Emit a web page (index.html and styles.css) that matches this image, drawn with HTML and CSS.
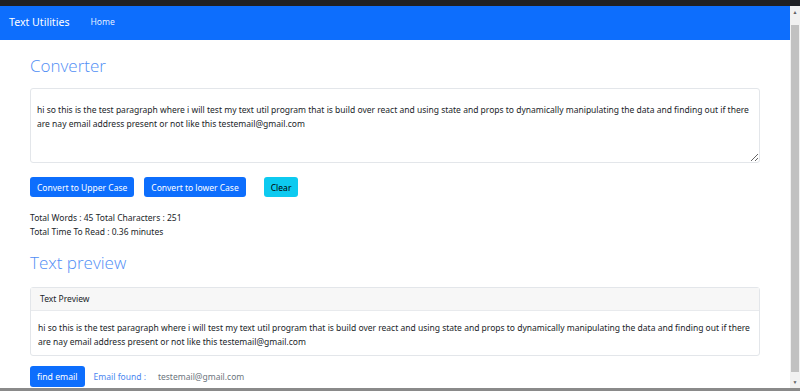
FILE: index.html
```html
<!DOCTYPE html>
<html lang="en">
<head>
  <meta charset="UTF-8">
  <meta name="viewport" content="width=device-width, initial-scale=1.0">
  <title>Text Utilities</title>
  <link rel="stylesheet" href="styles.css">
</head>
<body>

  <div class="chrome-top"></div>

  <div class="frame">
    <div class="page">

      <!-- navbar -->
      <nav class="navbar">
        <span class="brand">Text Utilities</span>
        <a class="nav-link" href="#">Home</a>
      </nav>

      <div class="container">
        <h1 class="title">Converter</h1>
        <textarea class="text-box" rows="5">hi so this is the test paragraph where i will test my text util program that is build over react and using state and props to dynamically manipulating the data and finding out if there are nay email address present or not like this testemail@gmail.com</textarea>

        <div class="actions">
          <button class="btn btn-primary">Convert to Upper Case</button>
          <button class="btn btn-primary">Convert to lower Case</button>
          <button class="btn btn-info">Clear</button>
        </div>

        <div class="stats">
          <p>Total Words : 45 Total Characters : 251</p>
          <p>Total Time To Read : 0.36 minutes</p>
        </div>

        <h1 class="title title-preview">Text preview</h1>
        <div class="card">
          <div class="card-header">Text Preview</div>
          <div class="card-body">hi so this is the test paragraph where i will test my text util program that is build over react and using state and props to dynamically manipulating the data and finding out if there are nay email address present or not like this testemail@gmail.com</div>
        </div>

        <div class="email-row">
          <button class="btn btn-primary btn-find">find email</button>
          <span class="email-label">Email found :</span>
          <span class="email-value">testemail@gmail.com</span>
        </div>
      </div>

    </div>

    <!-- fake window scrollbar -->
    <div class="scrollbar">
      <span class="arrow">&#9650;</span>
      <div class="thumb"></div>
      <span class="arrow">&#9660;</span>
    </div>
  </div>

  <div class="chrome-bottom"></div>

</body>
</html>
```

FILE: styles.css
```css
body {
  margin: 0;
  padding: 0;
  font-family: 'Noto Sans', 'Open Sans', sans-serif;
  font-size: 8.5px;
  color: #212529;
  background: #fff;
  height: 391px;
  overflow: hidden;
}

.chrome-top {
  height: 6px;
  background: #202124;
}

.frame {
  display: flex;
  height: 382px;
}

.page {
  flex: 1;
  overflow: hidden;
}

.navbar {
  height: 34px;
  background: #0d6efd;
  display: flex;
  align-items: center;
  padding: 0 0 2px 9px;
  box-sizing: border-box;
}

.brand {
  color: #fff;
  font-size: 10.6px;
  margin-right: 21px;
}

.nav-link {
  color: rgba(255, 255, 255, 0.9);
  text-decoration: none;
  font-size: 8.6px;
}

.container {
  padding: 0 30px;
}

.title {
  font-family: 'Open Sans', 'Noto Sans', sans-serif;
  font-weight: 300;
  font-size: 17px;
  color: #4f8ef5;
  margin: 14px 0 10px;
  line-height: 24px;
}

.text-box {
  display: block;
  width: 100%;
  height: 75px;
  box-sizing: border-box;
  border: 1px solid #e3e6ea;
  border-radius: 3px;
  padding: 14px 6px 4px;
  font-family: inherit;
  font-size: 8.5px;
  line-height: 13.5px;
  color: #212529;
  resize: vertical;
}

.actions {
  display: flex;
  gap: 10px;
  margin-top: 14px;
}

.btn {
  border: none;
  border-radius: 3px;
  height: 20px;
  padding: 0 7px;
  font-family: inherit;
  font-size: 8.5px;
  cursor: pointer;
}

.btn-primary {
  background: #0d6efd;
  color: #fff;
}

.btn-info {
  background: #0dcaf0;
  color: #000;
  margin-left: 8px;
}

.stats {
  margin-top: 14px;
}

.stats p {
  margin: 0;
  line-height: 14px;
}

.title-preview {
  margin: 12px 0 12px;
}

.card {
  border: 1px solid #e3e6ea;
  border-radius: 3px;
}

.card-header {
  background: #f7f7f7;
  border-bottom: 1px solid #e8eaed;
  height: 22px;
  line-height: 22px;
  padding: 0 9px;
}

.card-body {
  padding: 10px 7px 7px;
  line-height: 13.5px;
}

.email-row {
  display: flex;
  align-items: center;
  margin-top: 10px;
}

.btn-find {
  height: 21px;
  font-size: 8.7px;
}

.email-label {
  color: #4a86f0;
  margin-left: 9px;
}

.email-value {
  color: #6c757d;
  margin-left: 12px;
}

.scrollbar {
  width: 10px;
  background: #f1f1f1;
  display: flex;
  flex-direction: column;
  align-items: center;
}

.arrow {
  font-size: 5px;
  color: #606060;
  height: 12px;
  line-height: 12px;
}

.thumb {
  flex: 1;
  width: 8px;
  background: #c1c1c1;
  margin: 7px 0 4px;
}

.chrome-bottom {
  height: 3px;
  background: #8a8a8a;
}
```
